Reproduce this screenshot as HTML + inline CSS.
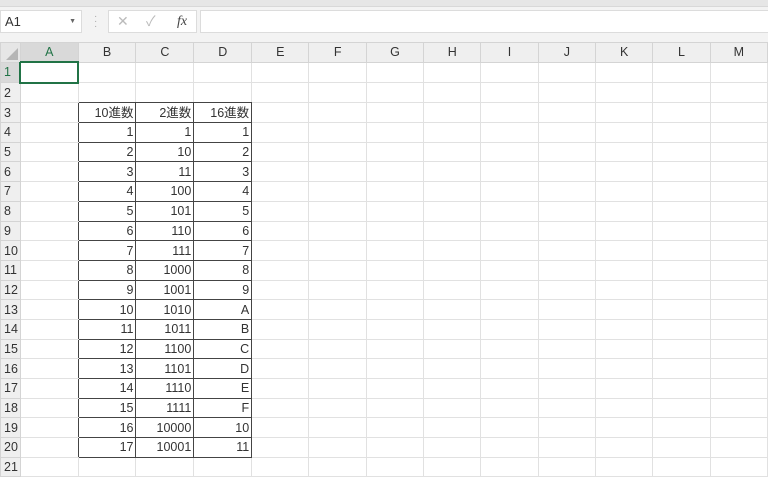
<!DOCTYPE html>
<html><head><meta charset="utf-8"><style>
body{margin:0;width:768px;height:462px;overflow:hidden;background:#fff;font-family:"Liberation Sans","Noto Sans CJK JP",sans-serif;position:relative}
.top{position:absolute;left:0;top:0;width:768px;height:42px;background:#f3f3f3}
.strip{position:absolute;left:0;top:0;width:768px;height:6px;background:#e6e6e6;border-bottom:1px solid #d8d8d8}
.nb{position:absolute;left:0;top:10px;width:82px;height:23px;background:#fff;border:1px solid #dcdcdc;box-sizing:border-box;font-size:13px;color:#333;line-height:21px;padding-left:4px}
.nb span{position:absolute;right:5px;top:0;font-size:7px;color:#666}
.ic{position:absolute;left:108px;top:10px;width:89px;height:23px;background:#fff;border:1px solid #dcdcdc;box-sizing:border-box;color:#bbb;font-size:14px;line-height:21px}
.fb{position:absolute;left:200px;top:10px;width:570px;height:23px;background:#fff;border:1px solid #dcdcdc;box-sizing:border-box}
table{position:absolute;left:0;top:42px;border-collapse:collapse;table-layout:fixed}
td{border:1px solid #e1e1e1;height:18.7px;padding:0 2px 0 0;font-size:12.5px;color:#333;text-align:right;white-space:nowrap;overflow:hidden;line-height:18px}
tr.h td{background:#efefef;text-align:center;color:#333;border-color:#d4d4d4;height:17.5px;padding:0}
td.r{background:#efefef;text-align:left;padding-left:3px;color:#333;border-color:#d4d4d4}
td.b{border:1px solid #444}
td.bl{border-right:1px solid #444}
td.bt{border-bottom:1px solid #444}
</style></head><body>
<div class="top"><div class="strip"></div>
<div class="nb">A1<span>▼</span></div>
<div style="position:absolute;left:94px;top:14px;color:#aaa;font-size:10px;line-height:5px">·<br>·<br>·</div>
<div class="ic"><span style="position:absolute;left:8px">✕</span><span style="position:absolute;left:37px">✓</span><span style="position:absolute;left:68px;color:#444;font-style:italic;font-family:'Liberation Serif',serif">fx</span></div>
<div class="fb"></div></div>
<table>
<colgroup><col style="width:20px"><col style="width:58px"><col style="width:58px"><col style="width:58px"><col style="width:58px"><col style="width:57.7px"><col style="width:57.7px"><col style="width:57.7px"><col style="width:57.7px"><col style="width:57.7px"><col style="width:57.7px"><col style="width:57.7px"><col style="width:57.7px"><col style="width:57.7px"></colgroup>
<tr class="h"><td style="background:#e6e6e6;position:relative"><div style="position:absolute;right:2px;bottom:2px;width:0;height:0;border-left:12px solid transparent;border-bottom:12px solid #b5b5b5"></div></td><td style="background:#d9d9d9;color:#217346;border-bottom:2px solid #217346">A</td><td>B</td><td>C</td><td>D</td><td>E</td><td>F</td><td>G</td><td>H</td><td>I</td><td>J</td><td>K</td><td>L</td><td>M</td></tr>
<tr><td class="r" style="background:#d9d9d9;color:#217346">1</td><td style="border:2px solid #217346"></td><td></td><td></td><td></td><td></td><td></td><td></td><td></td><td></td><td></td><td></td><td></td><td></td></tr>
<tr><td class="r">2</td><td></td><td class="bt"></td><td class="bt"></td><td class="bt"></td><td></td><td></td><td></td><td></td><td></td><td></td><td></td><td></td><td></td></tr>
<tr><td class="r">3</td><td class="bl"></td><td class="b">10進数</td><td class="b">2進数</td><td class="b">16進数</td><td></td><td></td><td></td><td></td><td></td><td></td><td></td><td></td><td></td></tr>
<tr><td class="r">4</td><td class="bl"></td><td class="b">1</td><td class="b">1</td><td class="b">1</td><td></td><td></td><td></td><td></td><td></td><td></td><td></td><td></td><td></td></tr>
<tr><td class="r">5</td><td class="bl"></td><td class="b">2</td><td class="b">10</td><td class="b">2</td><td></td><td></td><td></td><td></td><td></td><td></td><td></td><td></td><td></td></tr>
<tr><td class="r">6</td><td class="bl"></td><td class="b">3</td><td class="b">11</td><td class="b">3</td><td></td><td></td><td></td><td></td><td></td><td></td><td></td><td></td><td></td></tr>
<tr><td class="r">7</td><td class="bl"></td><td class="b">4</td><td class="b">100</td><td class="b">4</td><td></td><td></td><td></td><td></td><td></td><td></td><td></td><td></td><td></td></tr>
<tr><td class="r">8</td><td class="bl"></td><td class="b">5</td><td class="b">101</td><td class="b">5</td><td></td><td></td><td></td><td></td><td></td><td></td><td></td><td></td><td></td></tr>
<tr><td class="r">9</td><td class="bl"></td><td class="b">6</td><td class="b">110</td><td class="b">6</td><td></td><td></td><td></td><td></td><td></td><td></td><td></td><td></td><td></td></tr>
<tr><td class="r">10</td><td class="bl"></td><td class="b">7</td><td class="b">111</td><td class="b">7</td><td></td><td></td><td></td><td></td><td></td><td></td><td></td><td></td><td></td></tr>
<tr><td class="r">11</td><td class="bl"></td><td class="b">8</td><td class="b">1000</td><td class="b">8</td><td></td><td></td><td></td><td></td><td></td><td></td><td></td><td></td><td></td></tr>
<tr><td class="r">12</td><td class="bl"></td><td class="b">9</td><td class="b">1001</td><td class="b">9</td><td></td><td></td><td></td><td></td><td></td><td></td><td></td><td></td><td></td></tr>
<tr><td class="r">13</td><td class="bl"></td><td class="b">10</td><td class="b">1010</td><td class="b">A</td><td></td><td></td><td></td><td></td><td></td><td></td><td></td><td></td><td></td></tr>
<tr><td class="r">14</td><td class="bl"></td><td class="b">11</td><td class="b">1011</td><td class="b">B</td><td></td><td></td><td></td><td></td><td></td><td></td><td></td><td></td><td></td></tr>
<tr><td class="r">15</td><td class="bl"></td><td class="b">12</td><td class="b">1100</td><td class="b">C</td><td></td><td></td><td></td><td></td><td></td><td></td><td></td><td></td><td></td></tr>
<tr><td class="r">16</td><td class="bl"></td><td class="b">13</td><td class="b">1101</td><td class="b">D</td><td></td><td></td><td></td><td></td><td></td><td></td><td></td><td></td><td></td></tr>
<tr><td class="r">17</td><td class="bl"></td><td class="b">14</td><td class="b">1110</td><td class="b">E</td><td></td><td></td><td></td><td></td><td></td><td></td><td></td><td></td><td></td></tr>
<tr><td class="r">18</td><td class="bl"></td><td class="b">15</td><td class="b">1111</td><td class="b">F</td><td></td><td></td><td></td><td></td><td></td><td></td><td></td><td></td><td></td></tr>
<tr><td class="r">19</td><td class="bl"></td><td class="b">16</td><td class="b">10000</td><td class="b">10</td><td></td><td></td><td></td><td></td><td></td><td></td><td></td><td></td><td></td></tr>
<tr><td class="r">20</td><td class="bl"></td><td class="b">17</td><td class="b">10001</td><td class="b">11</td><td></td><td></td><td></td><td></td><td></td><td></td><td></td><td></td><td></td></tr>
<tr><td class="r">21</td><td></td><td></td><td></td><td></td><td></td><td></td><td></td><td></td><td></td><td></td><td></td><td></td><td></td></tr>
</table>
</body></html>
